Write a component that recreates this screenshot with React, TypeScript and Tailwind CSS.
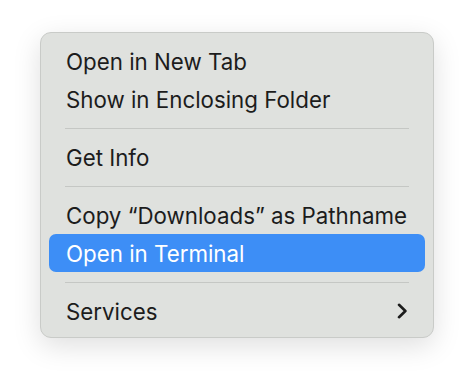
type Item = { label: string; active?: boolean; submenu?: boolean };

// groups of menu items, separated by dividers
const groups: Item[][] = [
  [{ label: "Open in New Tab" }, { label: "Show in Enclosing Folder" }],
  [{ label: "Get Info" }],
  [
    { label: "Copy \u201CDownloads\u201D as Pathname" },
    { label: "Open in Terminal", active: true },
  ],
  [{ label: "Services", submenu: true }],
];

function Chevron() {
  return (
    <svg width="12" height="16" viewBox="0 0 12 16" fill="none">
      <path
        d="M3 1.8 L9.4 8 L3 14.2"
        stroke="currentColor"
        strokeWidth="2.6"
        strokeLinecap="round"
        strokeLinejoin="round"
      />
    </svg>
  );
}

function MenuRow({ item }: { item: Item }) {
  return (
    <div
      className={
        "flex h-[38px] items-center justify-between rounded-[7px] pl-[17px] pr-[17px] " +
        (item.active ? "bg-[#3d8ef6] text-white" : "text-[#1c1c1c]")
      }
    >
      <span className="whitespace-nowrap pt-[1px]">{item.label}</span>
      {item.submenu && <Chevron />}
    </div>
  );
}

export default function App() {
  return (
    <div
      className="h-[386px] w-[474px] bg-white pl-[40px] pt-[32px]"
      style={{ fontFamily: "Inter, 'Liberation Sans', sans-serif" }}
    >
      <div className="w-[394px] rounded-[11px] border border-[#c9cbc8] bg-[#dfe1de] px-[8px] pt-[9px] pb-[7px] text-[22.3px] shadow-[0_8px_28px_rgba(0,0,0,0.13)]">
        {groups.map((group, gi) => (
          <div key={gi}>
            {gi > 0 && (
              <div className="flex h-[20px] items-center px-[16px]">
                <div className="h-px w-full bg-[#c5c7c4]" />
              </div>
            )}
            {group.map((item) => (
              <MenuRow key={item.label} item={item} />
            ))}
          </div>
        ))}
      </div>
    </div>
  );
}
